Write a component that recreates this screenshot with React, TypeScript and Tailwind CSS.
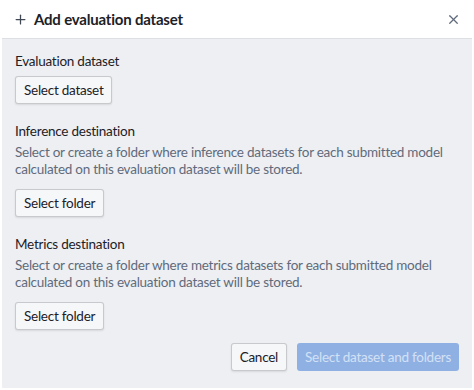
import { Plus, X } from "lucide-react";

const btn =
  "h-[28px] px-[9px] rounded-[3px] bg-[#f6f7f9] text-[13.5px] tracking-[-0.25px] text-[#1c2127] shadow-[inset_0_0_0_1px_rgba(17,20,24,0.2),0_1px_2px_rgba(17,20,24,0.1)]";

function Section({ title, desc, action }: { title: string; desc?: string; action: string }) {
  return (
    <div className="flex flex-col items-start">
      <div className="text-[13.5px] tracking-[-0.25px] leading-[18px] text-[#1c2127]">{title}</div>
      {desc && (
        <p className="mt-[4px] text-[13.5px] tracking-[-0.25px] leading-[17px] text-[#5f6b7c]">{desc}</p>
      )}
      <button className={`${btn} ${desc ? "mt-[11px]" : "mt-[6px]"}`}>{action}</button>
    </div>
  );
}

export default function App() {
  return (
    <div
      className="w-[474px] h-[390px] bg-white px-[2px] pb-[2px] flex flex-col"
      style={{ fontFamily: "Lato, 'Liberation Sans', sans-serif" }}
    >
      <div className="h-[39px] flex items-center pl-[11px] pr-[11px] border-b border-[#dcdfe4] shrink-0">
        <Plus size={15} strokeWidth={2} className="text-[#404854]" />
        <h1 className="ml-[6px] text-[15px] tracking-[-0.2px] font-bold text-[#1c2127] flex-1">
          Add evaluation dataset
        </h1>
        <X size={15} strokeWidth={2} className="text-[#5f6b7c]" />
      </div>
      <div className="flex-1 bg-[#eeeff2] px-[13px] pt-[13px] flex flex-col">
        <div className="flex flex-col gap-[18px]">
          <Section title="Evaluation dataset" action="Select dataset" />
          <Section
            title="Inference destination"
            desc="Select or create a folder where inference datasets for each submitted model calculated on this evaluation dataset will be stored."
            action="Select folder"
          />
          <Section
            title="Metrics destination"
            desc="Select or create a folder where metrics datasets for each submitted model calculated on this evaluation dataset will be stored."
            action="Select folder"
          />
        </div>
        <div className="mt-[13px] flex justify-end gap-[10px]">
          <button className={btn}>Cancel</button>
          <button className="h-[28px] px-[8px] rounded-[3px] bg-[#8fb0e3] text-[13.5px] tracking-[-0.25px] text-[#d3e1f5]">
            Select dataset and folders
          </button>
        </div>
      </div>
    </div>
  );
}
